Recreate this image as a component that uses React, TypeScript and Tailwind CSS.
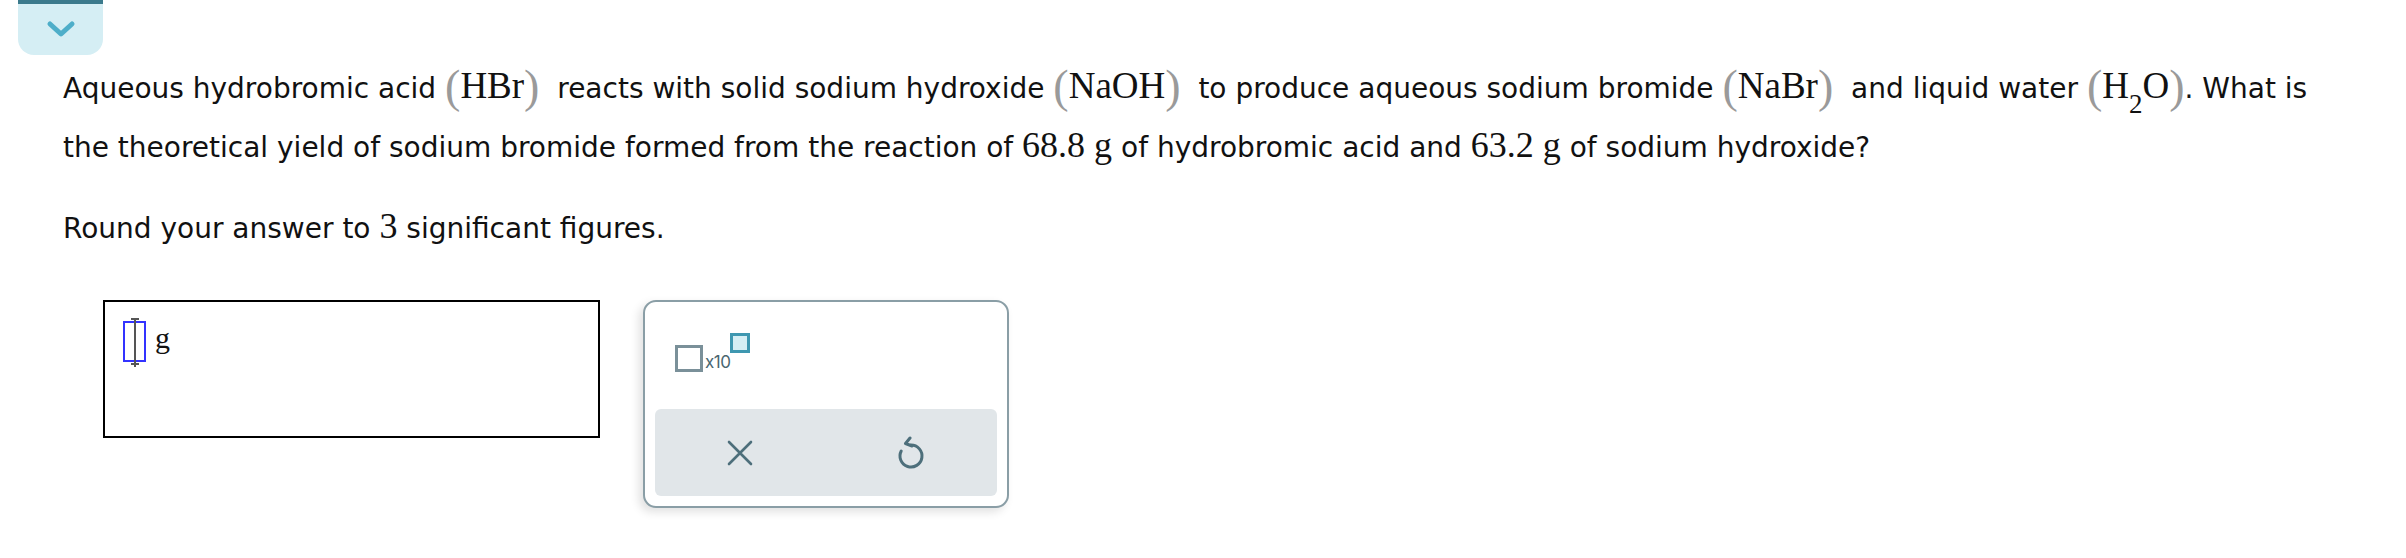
function M({ children }: { children: React.ReactNode }) {
  // inline math, rendered in a serif face a bit larger than the prose
  return <span className="font-['Liberation_Serif','Times_New_Roman',serif] text-[36px] leading-none">{children}</span>
}

function Paren({ children }: { children: React.ReactNode }) {
  return (
    <span className="font-['Liberation_Serif',serif] text-[37px] leading-none">
      <span className="inline-block text-[#9a9a9a] font-light text-[46px] align-[-0.08em]">(</span>
      {children}
      <span className="inline-block text-[#9a9a9a] font-light text-[46px] align-[-0.08em]">)</span>
    </span>
  )
}

export default function App() {
  return (
    <div className="w-[2406px] h-[558px] bg-white text-[#111] font-['DejaVu_Sans','Verdana',sans-serif]">
      <div className="ml-[18px] w-[85px] h-[55px] bg-[#d5eef4] border-t-[4px] border-[#3b7a8c] rounded-b-[16px] flex items-center justify-center">
        <svg width="32" height="20" viewBox="0 0 32 20" fill="none">
          <path d="M5 4 L16 14 L27 4" stroke="#4eaec9" strokeWidth="5" strokeLinecap="round" strokeLinejoin="round" />
        </svg>
      </div>

      <div className="pl-[63px] pt-[4px] w-[2330px] text-[28px] leading-[59px]">
        <p>
          Aqueous hydrobromic acid <Paren>HBr</Paren>&nbsp; reacts with solid sodium hydroxide <Paren>NaOH</Paren>&nbsp; to
          produce aqueous sodium bromide <Paren>NaBr</Paren>&nbsp; and liquid water{" "}
          <Paren>
            H<sub className="text-[27px] align-[-0.3em]">2</sub>O
          </Paren>
          . What is the theoretical yield of sodium bromide formed from the reaction of <M>68.8 g</M> of hydrobromic acid
          and <M>63.2 g</M> of sodium hydroxide?
        </p>
        <p className="mt-[22px]">
          Round your answer to <M>3</M> significant figures.
        </p>
      </div>

      <div className="flex items-start gap-[43px] ml-[103px] mt-[42px]">
        <div className="w-[497px] h-[138px] border-2 border-black pt-[19px] pl-[18px] flex items-start gap-[9px]">
          <div className="relative w-[23px] h-[41px] border-2 border-[#3333ff]">
            <div className="absolute left-1/2 -translate-x-1/2 -top-[5px] w-[2px] h-[49px] bg-[#555]" />
            <div className="absolute left-1/2 -translate-x-1/2 -top-[5px] w-[8px] h-[2px] bg-[#555]" />
            <div className="absolute left-1/2 -translate-x-1/2 -bottom-[5px] w-[8px] h-[2px] bg-[#555]" />
          </div>
          <span className="font-['Liberation_Serif',serif] text-[30px] leading-[34px]">g</span>
        </div>

        <div className="w-[366px] h-[208px] border-2 border-[#8a9ea6] rounded-[13px] bg-white shadow-[-4px_4px_10px_rgba(0,0,0,0.12)] px-[10px] pb-[10px] flex flex-col">
          <div className="h-[107px] pl-[20px] pt-[31px] flex items-start">
            <div className="mt-[12px] w-[28px] h-[27px] border-[3px] border-[#7a9099]" />
            <span className="mt-[19px] ml-[2px] font-['Inter',sans-serif] text-[17px] leading-[20px] text-[#4a6670] tracking-[-0.5px]">x10</span>
            <div className="w-[20px] h-[20px] border-[3px] border-[#3e97b0] bg-[#d5eef4]" />
          </div>
          <div className="flex-1 bg-[#e1e6e9] rounded-[6px] flex items-center justify-around text-[#4d6f7b]">
            <svg width="26" height="26" viewBox="0 0 26 26" fill="none" stroke="currentColor" strokeWidth="2.6" strokeLinecap="round">
              <path d="M2 2 L24 24 M24 2 L2 24" />
            </svg>
            <svg width="30" height="34" viewBox="0 0 30 34" fill="none" stroke="currentColor" strokeWidth="3" strokeLinecap="round" strokeLinejoin="round">
              <path d="M15 9 A11 11 0 1 1 5.2 15" />
              <path d="M14 2 L9.5 7.5 L16 10" />
            </svg>
          </div>
        </div>
      </div>
    </div>
  )
}
